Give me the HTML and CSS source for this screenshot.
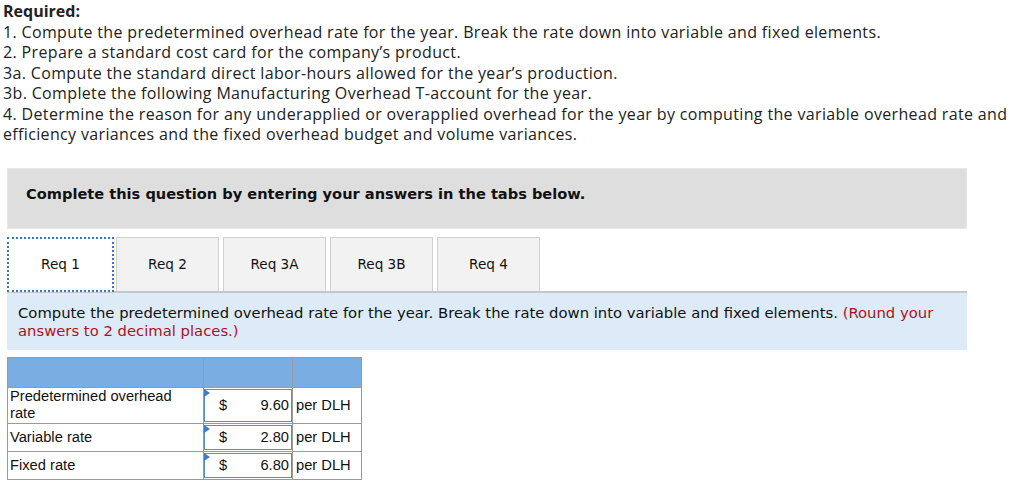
FILE: index.html
```html
<!DOCTYPE html>
<html>
<head>
<meta charset="utf-8">
<link rel="stylesheet" href="styles.css">
</head>
<body>
<div class="req">
  <div class="req-title">Required:</div>
  <div>1. Compute the predetermined overhead rate for the year. Break the rate down into variable and fixed elements.</div>
  <div>2. Prepare a standard cost card for the company’s product.</div>
  <div>3a. Compute the standard direct labor-hours allowed for the year’s production.</div>
  <div>3b. Complete the following Manufacturing Overhead T-account for the year.</div>
  <div>4. Determine the reason for any underapplied or overapplied overhead for the year by computing the variable overhead rate and efficiency variances and the fixed overhead budget and volume variances.</div>
</div>
<div class="banner">Complete this question by entering your answers in the tabs below.</div>
<div class="tabs">
  <div class="tab active">Req 1</div>
  <div class="tab">Req 2</div>
  <div class="tab">Req 3A</div>
  <div class="tab">Req 3B</div>
  <div class="tab">Req 4</div>
</div>
<div class="panel">Compute the predetermined overhead rate for the year. Break the rate down into variable and fixed elements. <span class="red">(Round your answers to 2 decimal places.)</span></div>
<table class="grid">
  <colgroup><col class="w-label"><col class="w-val"><col class="w-unit"></colgroup>
  <tr class="head"><td></td><td></td><td></td></tr>
  <tr class="r1"><td class="c-label">Predetermined overhead rate</td><td class="c-val"><div class="inp"><span>$</span><span>9.60</span></div></td><td class="c-unit">per DLH</td></tr>
  <tr class="r2"><td class="c-label">Variable rate</td><td class="c-val"><div class="inp"><span>$</span><span>2.80</span></div></td><td class="c-unit">per DLH</td></tr>
  <tr class="r2"><td class="c-label">Fixed rate</td><td class="c-val"><div class="inp"><span>$</span><span>6.80</span></div></td><td class="c-unit">per DLH</td></tr>
</table>
</body>
</html>
```
FILE: styles.css
```css
html, body { margin: 0; padding: 0; background: #fff; }
body { width: 1024px; height: 485px; overflow: hidden; }
.req {
  font-family: "Open Sans", Lato, sans-serif;
  font-size: 16px;
  letter-spacing: 0.35px;
  line-height: 20.5px;
  color: #222;
  padding: 1px 0 0 3px;
  width: 1021px;
}
.req-title { font-weight: bold; letter-spacing: 0; }
.banner {
  margin: 23px 0 0 7px;
  background: #dedede;
  border: 1px solid #e6e6e6;
  font-family: "DejaVu Sans", Verdana, sans-serif;
  font-weight: bold;
  font-size: 14.6px;
  color: #111;
  padding: 0 0 0 18px;
  width: 940px;
  height: 59px;
  line-height: 49px;
}
.tabs {
  display: flex;
  margin: 8px 0 0 7px;
  gap: 4px;
  height: 54px;
}
.tab {
  background: #f2f2f2;
  border: 1px solid #d0d0d0;
  border-bottom: none;
  font-family: "DejaVu Sans", Verdana, sans-serif;
  font-size: 13.6px;
  color: #111;
  display: flex;
  align-items: center;
  justify-content: center;
  box-sizing: border-box;
  height: 54px;
  width: 103px;
}
.tab.active {
  background: #fff;
  border: 2px dotted #3a73c4;
  width: 107px;
  margin-right: -2px;
  height: 55px;
  position: relative;
  z-index: 1;
}
.panel {
  margin-left: 7px;
  width: 960px;
  box-sizing: border-box;
  background: #dcebf7;
  border-top: 2px solid #c4c8cc;
  padding: 11px 20px 8px 11px;
  font-family: "DejaVu Sans", Verdana, sans-serif;
  font-size: 14.8px;
  line-height: 18px;
  color: #111;
  height: 59px;
}
.red { color: #b0101c; }
.grid {
  margin: 7px 0 0 7px;
  border-collapse: collapse;
  table-layout: fixed;
  width: 354px;
  font-family: "Liberation Sans", Arial, sans-serif;
  font-size: 14.7px;
  color: #111;
}
.w-label { width: 196px; }
.w-val { width: 89px; }
.w-unit { width: 69px; }
.grid td {
  border: 1px solid #9a9a9a;
  padding: 0;
}
.head td { background: #7aade2; height: 29px; }
.c-label { padding: 0 10px 0 2px !important; line-height: 17px; }
.c-unit { padding-left: 3px !important; white-space: nowrap; }
.r1 td { height: 35px; }
.r2 td { height: 27px; }
.inp {
  position: relative;
  display: flex;
  justify-content: space-between;
  align-items: center;
  border: 1px solid #5b8ec9;
  padding: 0 2px 0 14px;
  box-sizing: border-box;
}
.r1 .inp { height: 33px; }
.r2 .inp { height: 25px; }
.inp::before {
  content: "";
  position: absolute;
  left: -1px;
  top: -1px;
  border-left: 6px solid #3b7cc7;
  border-top: 4px solid transparent;
  border-bottom: 4px solid transparent;
}
```
